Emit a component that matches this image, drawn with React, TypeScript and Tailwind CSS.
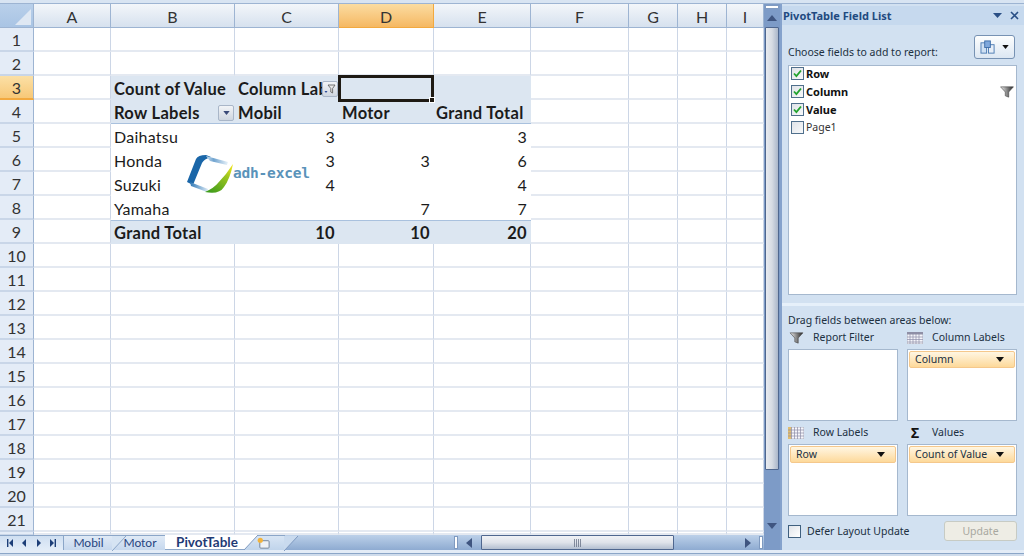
import React from "react";

const cols = ["A", "B", "C", "D", "E", "F", "G", "H", "I"];

type C = { t?: string; b?: boolean; r?: boolean; cls?: string; extra?: React.ReactNode };

const Filter = ({ className = "" }: { className?: string }) => (
  <svg viewBox="0 0 16 14" className={className}>
    <defs>
      <linearGradient id="fg" x1="0" x2="1" y1="0" y2="0">
        <stop offset="0" stopColor="#f0f0f0" />
        <stop offset="0.5" stopColor="#888" />
        <stop offset="1" stopColor="#222" />
      </linearGradient>
    </defs>
    <path d="M0.5 1h15l-5.5 6v6l-4-1.5V7z" fill="url(#fg)" stroke="#444" strokeWidth="0.7" />
  </svg>
);

const GridIcon = () => (
  <svg viewBox="0 0 16 12" className="h-[12px] w-[16px]">
    <rect x="0" y="0" width="16" height="12" fill="#f6f6fb" stroke="#8a8a9a" strokeWidth="0.6" />
    <rect x="0" y="0" width="16" height="2.5" fill="#8f8fa5" />
    <path d="M3 0v12M6 0v12M9 0v12M12 0v12M0 5h16M0 7.5h16M0 10h16" stroke="#8c8ca8" strokeWidth="0.7" />
  </svg>
);

const RowIcon = () => (
  <svg viewBox="0 0 16 12" className="h-[12px] w-[16px]">
    <rect x="0" y="0" width="16" height="12" fill="#f6f6fb" stroke="#8a8a9a" strokeWidth="0.6" />
    <rect x="0" y="0" width="3.5" height="12" fill="#e2bd6f" />
    <path d="M3.5 0v12M6.5 0v12M9.5 0v12M12.5 0v12M0 3h16M0 6h16M0 9h16" stroke="#8c8ca8" strokeWidth="0.7" />
  </svg>
);

const Drop = ({ className = "" }: { className?: string }) => (
  <svg viewBox="0 0 8 5" className={className}>
    <path d="M0 0h8L4 5z" fill="#111" />
  </svg>
);

const Check = ({ on }: { on: boolean }) => (
  <span className="flex h-[13px] w-[13px] shrink-0 items-center justify-center border border-[#4f6f8c] bg-gradient-to-br from-[#dfe3e8] to-[#f8f9fa]">
    {on && (
      <svg viewBox="0 0 11 11" className="h-[11px] w-[11px]">
        <path d="M2 5.5l2.4 2.6L9 2.5" fill="none" stroke="#22a32e" strokeWidth="1.8" />
      </svg>
    )}
  </span>
);

const FilterBtn = ({ funnel }: { funnel?: boolean }) => (
  <span className="absolute right-[1px] top-[5px] flex h-[16px] w-[16px] items-center justify-center rounded-[2px] border border-[#a9b6c8] bg-gradient-to-b from-[#f2f4f7] to-[#cfd6e0]">
    {funnel ? (
      <svg viewBox="0 0 12 10" className="h-[10px] w-[12px]">
        <path d="M4 1h7L8.6 4.5V9L6.8 8V4.5z" fill="#e8e8e8" stroke="#555" strokeWidth="0.8" />
        <path d="M0.5 7h3L2 9z" fill="#2b4a9a" />
      </svg>
    ) : (
      <svg viewBox="0 0 8 5" className="h-[4px] w-[7px]">
        <path d="M0 0h8L4 5z" fill="#3a4a78" />
      </svg>
    )}
  </span>
);

const blue = "bg-[#dce6f1]";
const under = "bg-[#dce6f1] shadow-[inset_0_-1px_0_#a9c1de]";
const over = "bg-[#dce6f1] shadow-[inset_0_1px_0_#a9c1de]";

const pivot: Record<number, C[]> = {
  3: [
    { t: "Count of Value", b: true, cls: blue },
    { t: "Column Labels", b: true, cls: blue, extra: <FilterBtn funnel /> },
    { cls: blue },
    { cls: blue },
  ],
  4: [
    { t: "Row Labels", b: true, cls: under, extra: <FilterBtn /> },
    { t: "Mobil", b: true, cls: under },
    { t: "Motor", b: true, cls: under },
    { t: "Grand Total", b: true, cls: `${under} !pl-[2px]` },
  ],
  5: [{ t: "Daihatsu" }, { t: "3", r: true }, {}, { t: "3", r: true }],
  6: [{ t: "Honda" }, { t: "3", r: true }, { t: "3", r: true }, { t: "6", r: true }],
  7: [{ t: "Suzuki" }, { t: "4", r: true }, {}, { t: "4", r: true }],
  8: [{ t: "Yamaha" }, {}, { t: "7", r: true }, { t: "7", r: true }],
  9: [
    { t: "Grand Total", b: true, cls: over },
    { t: "10", b: true, r: true, cls: over },
    { t: "10", b: true, r: true, cls: over },
    { t: "20", b: true, r: true, cls: over },
  ],
};

const empty = "border-r border-b-2 border-r-[#ccd6e6] border-b-[#e4e9f1]";

function Row({ n, clip }: { n: number; clip?: boolean }) {
  const p = pivot[n];
  const head = n === 3
    ? "bg-gradient-to-b from-[#fbe0a6] to-[#f7c877] border-b-[#f2a93f]"
    : "bg-[#e4ecf7] border-b-[#c9d6e8]";
  return (
    <>
      <div className={`flex items-center justify-center border-r border-b-2 border-r-[#9db4d2] pt-[2px] text-[16px] text-[#333] ${head}`}>
        {!clip && n}
      </div>
      <div className={empty} />
      {p
        ? p.map((c, i) => (
            <div
              key={i}
              className={`relative flex items-center overflow-hidden whitespace-nowrap pb-0 pl-[3px] pr-[4px] pt-[2px] leading-none text-[#1b1b1b] ${c.r ? "justify-end" : ""} ${c.b ? "text-[16.5px] font-bold tracking-[0.3px]" : "text-[16px] tracking-[0.25px]"} ${c.cls ?? ""}`}
            >
              {c.t}
              {c.extra}
            </div>
          ))
        : [0, 1, 2, 3].map((i) => <div key={i} className={empty} />)}
      {[0, 1, 2, 3].map((i) => (
        <div key={i} className={empty} />
      ))}
    </>
  );
}

const Logo = () => (
  <div className="pointer-events-none absolute left-[186px] top-[151px] flex items-center">
    <svg viewBox="0 0 50 42" className="h-[42px] w-[50px]">
      <defs>
        <linearGradient id="lg" x1="0.9" x2="0.2" y1="0" y2="1">
          <stop offset="0" stopColor="#f2e51c" />
          <stop offset="0.35" stopColor="#9cc51f" />
          <stop offset="1" stopColor="#3f9c1c" />
        </linearGradient>
        <linearGradient id="lb1" x1="0" x2="1" y1="0" y2="0">
          <stop offset="0" stopColor="#cfe2f2" />
          <stop offset="0.35" stopColor="#6fa3cf" />
          <stop offset="1" stopColor="#e9f2f9" />
        </linearGradient>
        <linearGradient id="lb2" x1="0" x2="1" y1="0" y2="0">
          <stop offset="0" stopColor="#2f78b5" />
          <stop offset="1" stopColor="#dbe9f5" />
        </linearGradient>
      </defs>
      <path d="M1 27L10 4Q12 0 20 0L25 2Q18 4 16 8L9 25L7 30Z" fill="#1a66a8" />
      <path d="M20 1L42 7L41 10L24 6Z" fill="url(#lb1)" />
      <path d="M4 27L22 34L21 37L5 31Z" fill="url(#lb2)" />
      <path d="M47 9Q44 24 38 32Q33 40 19 37Q28 33 32 28Q40 20 47 9Z" fill="url(#lg)" />
    </svg>
    <span className="-ml-[3px] mb-[6px] font-['DejaVu_Sans_Mono',monospace] text-[14.5px] font-bold leading-none tracking-[-0.2px] text-[#5a93ba]">adh-excel</span>
  </div>
);

const Slant = ({ fill = "#cfdff1" }: { fill?: string }) => (
  <svg viewBox="0 0 14 15" className="absolute -right-[13px] top-0 z-10 h-[15px] w-[14px]">
    <path d="M0 15L14 0H0z" fill={fill} />
    <path d="M0 15L14 0" stroke="#8ba6c8" strokeWidth="1" />
  </svg>
);

const Nav = ({ d }: { d: string }) => (
  <svg viewBox="0 0 8 8" className="h-[8px] w-[8px]">
    <path d={d} fill="#1d3f78" />
  </svg>
);

function TabBar() {
  return (
    <div className="flex h-[15px] items-stretch bg-gradient-to-b from-[#bcd0e9] to-[#8eabd1] text-[12px] leading-none text-[#27457f]">
      <div className="flex w-[63px] items-center justify-around border-t border-t-[#8ba6c8] bg-gradient-to-b from-[#cfdff1] to-[#e3edf8] px-[3px]">
        <Nav d="M1 0h1.4v8H1zM7 0v8L3 4z" />
        <Nav d="M6 0v8L2 4z" />
        <Nav d="M2 0v8l4-4z" />
        <Nav d="M1 0v8l4-4zM5.6 0H7v8H5.6z" />
      </div>
      <div className="relative flex w-[50px] items-center justify-center border-l border-t border-[#8ba6c8] bg-gradient-to-b from-[#e0eaf6] to-[#c6d8ee]">
        Mobil
        <Slant fill="#d6e4f3" />
      </div>
      <div className="relative flex w-[52px] items-center justify-center border-t border-[#8ba6c8] bg-gradient-to-b from-[#e0eaf6] to-[#c6d8ee] pl-[2px]">
        Motor
      </div>
      <div className="relative z-20 flex w-[80px] items-center justify-center bg-white pl-[4px] text-[13.5px] font-bold text-[#1f3a75] shadow-[inset_0_-1px_0_#8ba6c8]">
        PivotTable
        <svg viewBox="0 0 14 15" className="absolute -right-[13px] top-0 h-[15px] w-[14px]">
          <path d="M0 15L14 0H0z" fill="#fff" />
          <path d="M0 15L14 0" stroke="#7f9ac0" strokeWidth="1" />
        </svg>
      </div>
      <div className="relative flex w-[40px] items-center border-t border-[#8ba6c8] bg-gradient-to-b from-[#d8e5f4] to-[#c0d4eb] pl-[12px]">
        <svg viewBox="0 0 15 14" className="h-[13px] w-[14px]">
          <rect x="3" y="4" width="10" height="8" rx="1" fill="#eef2f7" stroke="#6f7f95" />
          <circle cx="3.5" cy="3.5" r="2.8" fill="#f2b33c" />
        </svg>
        <svg viewBox="0 0 14 15" className="absolute -right-[13px] top-0 h-[15px] w-[14px]">
          <path d="M0 15L14 0H0z" fill="#c9daee" />
          <path d="M0 15L14 0" stroke="#7f9ac0" strokeWidth="1" />
        </svg>
      </div>
      <div className="flex-1" />
      <div className="my-[1px] mr-[8px] w-[4px] border border-[#7f9ac0] bg-white" />
      <div className="flex w-[10px] items-center">
        <svg viewBox="0 0 6 10" className="h-[10px] w-[6px]"><path d="M6 0v10L0 5z" fill="#3f5580" /></svg>
      </div>
      <div className="w-[5px]" />
      <div className="flex w-[193px] items-center justify-center rounded-[1px] border border-[#4f678f] bg-gradient-to-b from-[#f0f2f6] via-[#dfe3ea] to-[#b3bfd0]">
        <svg viewBox="0 0 8 8" className="h-[8px] w-[8px]"><path d="M0.5 0v8M2.5 0v8M4.5 0v8M6.5 0v8" stroke="#6a7488" strokeWidth="0.8" /></svg>
      </div>
      <div className="flex w-[85px] items-center justify-end pr-[8px]">
        <svg viewBox="0 0 6 10" className="h-[10px] w-[6px]"><path d="M0 0v10l6-5z" fill="#3f5580" /></svg>
      </div>
      <div className="my-[1px] mr-[1px] w-[4px] border border-[#7f9ac0] bg-white" />
    </div>
  );
}

function VScroll() {
  return (
    <div className="flex w-[16px] shrink-0 flex-col bg-[#7d9bc7] pb-[15px]">
      <div className="mx-[1px] mt-[1px] h-[4px] border border-[#7f9ac0] bg-white" />
      <div className="flex h-[18px] items-center justify-center">
        <svg viewBox="0 0 10 6" className="h-[6px] w-[10px]"><path d="M0 6h10L5 0z" fill="#3f5580" /></svg>
      </div>
      <div className="mx-[1px] h-[443px] flex-none rounded-[1px] border border-[#4f678f] bg-gradient-to-r from-[#e8ebf0] via-[#d6dbe3] to-[#aab6c9]" />
      <div className="flex-1" />
      <div className="flex h-[18px] items-center justify-center">
        <svg viewBox="0 0 10 6" className="h-[6px] w-[10px]"><path d="M0 0h10L5 6z" fill="#3f5580" /></svg>
      </div>
    </div>
  );
}

const Chip = ({ label }: { label: string }) => (
  <div className="m-[1px] flex h-[17px] items-center justify-between rounded-[2px] border border-[#f5c88c] bg-gradient-to-b from-[#fff6e2] to-[#fdd99a] pl-[5px] pr-[10px]">
    <span>{label}</span>
    <Drop className="h-[5px] w-[8px]" />
  </div>
);

const Area = ({ icon, label, chip }: { icon: React.ReactNode; label: string; chip?: string }) => (
  <div className="flex flex-col">
    <div className="flex h-[23px] items-center gap-[9px]">
      <span className="flex w-[16px] justify-center">{icon}</span>
      <span>{label}</span>
    </div>
    <div className="h-[72px] border border-[#a5b8ce] bg-white">{chip && <Chip label={chip} />}</div>
  </div>
);

function Pane() {
  const items: [string, boolean][] = [["Row", true], ["Column", true], ["Value", true], ["Page1", false]];
  return (
    <div className="flex flex-1 flex-col border-l-2 border-l-[#85a2cc] bg-[#d2e1f1] font-['Noto_Sans',sans-serif] text-[10.5px] leading-none text-[#20303f]">
      <div className="mt-[2px] flex h-[19px] items-center justify-between bg-[#c6d9ee] pl-[1px] pr-[5px] text-[11px] font-bold text-[#1f4a80]">
        <span>PivotTable Field List</span>
        <span className="flex items-center gap-[8px]">
          <svg viewBox="0 0 9 5" className="h-[5px] w-[9px]"><path d="M0 0h9L4.5 5z" fill="#2a4f85" /></svg>
          <svg viewBox="0 0 9 9" className="h-[9px] w-[9px]"><path d="M1 1l7 7M8 1l-7 7" stroke="#2a4f85" strokeWidth="1.6" /></svg>
        </span>
      </div>
      <div className="flex h-[40px] items-end justify-between pb-[5px] pl-[6px] pr-[9px]">
        <span className="mb-[3px]">Choose fields to add to report:</span>
        <div className="mb-[1px] flex h-[24px] w-[41px] items-center justify-center gap-[6px] rounded-[3px] border border-[#7792b3] bg-gradient-to-b from-[#fdfefe] to-[#dce7f3]">
          <svg viewBox="0 0 17 16" className="h-[15px] w-[16px]">
            <rect x="1" y="3" width="6" height="11" fill="#cfe0f3" stroke="#4d7cb3" />
            <rect x="9" y="5" width="6" height="9" fill="#e7eef7" stroke="#4d7cb3" />
            <rect x="5" y="1" width="6" height="7" fill="#7fa8dc" stroke="#3f6ea8" />
          </svg>
          <Drop className="h-[4px] w-[7px]" />
        </div>
      </div>
      <div className="relative ml-[6px] mr-[7px] h-[230px] border border-[#a5b8ce] bg-white px-[2px]">
        <div className="-mt-[2px]">
          {items.map(([l, on]) => (
            <div key={l} className="flex h-[18px] items-center gap-[2px]">
              <Check on={on} />
              <span className={on ? "text-[11px] font-bold text-[#111]" : "text-[#333]"}>{l}</span>
            </div>
          ))}
        </div>
        <Filter className="absolute right-[2px] top-[20px] h-[12px] w-[14px]" />
      </div>
      <div className="mt-[8px] h-[3px] bg-[#e6f0fa]" />
      <div className="ml-[6px] mt-[9px] h-[12px]">Drag fields between areas below:</div>
      <div className="mx-[6px] -mt-[1px] grid grid-cols-[110px_110px] gap-x-[9px]">
        <Area icon={<Filter className="h-[12px] w-[15px]" />} label="Report Filter" />
        <Area icon={<GridIcon />} label="Column Labels" chip="Column" />
        <Area icon={<RowIcon />} label="Row Labels" chip="Row" />
        <Area icon={<span className="text-[14px] font-bold text-[#111]">Σ</span>} label="Values" chip="Count of Value" />
      </div>
      <div className="flex flex-1 items-center justify-between pb-[4px] pl-[6px] pr-[7px]">
        <span className="flex items-center gap-[6px]">
          <span className="h-[13px] w-[13px] border border-[#3f607f] bg-gradient-to-br from-[#e0e4ea] to-white" />
          Defer Layout Update
        </span>
        <span className="flex h-[20px] w-[73px] items-center justify-center rounded-[3px] border border-[#c7cbc4] bg-[#eeede5] text-[#a8a8a0]">Update</span>
      </div>
    </div>
  );
}

export default function App() {
  const rows = Array.from({ length: 21 }, (_, i) => i + 1);
  return (
    <div className="flex h-[556px] w-[1024px] flex-col overflow-hidden bg-[#d2e1f1] font-['Lato',sans-serif]">
      <div className="h-[4px] border-b border-b-[#9db4d2] bg-[#d8e4f2]" />
      <div className="flex h-[546px] items-stretch">
        <div className="flex w-[764px] shrink-0 flex-col">
          <div className="relative h-[531px] overflow-hidden bg-white">
            <div className="grid grid-cols-[34px_77px_124px_104px_95px_97px_98px_49px_49px_37px] grid-rows-[24px_repeat(21,24px)_3px]">
              <div className="relative border-r border-b border-[#9db4d2] bg-gradient-to-b from-[#b9d0ea] to-[#a9c4e4]">
                <svg viewBox="0 0 16 16" className="absolute bottom-[2px] right-[2px] h-[16px] w-[16px]">
                  <path d="M16 0v16H0z" fill="#dfe8f3" />
                </svg>
              </div>
              {cols.map((c) => (
                <div
                  key={c}
                  className={`flex items-center justify-center border-r border-b pt-[2px] text-[16px] text-[#333] ${
                    c === "D"
                      ? "border-[#f2a93f] bg-gradient-to-b from-[#fbdca0] to-[#f5b862]"
                      : "border-r-[#9db4d2] border-b-[#9db4d2] bg-gradient-to-b from-[#f3f6fa] to-[#d6e1ee]"
                  }`}
                >
                  {c}
                </div>
              ))}
              {rows.map((n) => (
                <Row key={n} n={n} />
              ))}
              <Row n={22} clip />
            </div>
            <div className="absolute left-[338px] top-[71px] h-[27px] w-[96px] border-[3px] border-[#1e1a14]">
              <span className="absolute -bottom-[4px] -right-[4px] h-[6px] w-[6px] border border-white bg-[#1e1a14]" />
            </div>
            <Logo />
          </div>
          <TabBar />
        </div>
        <div className="flex w-[260px] flex-col">
          <div className="flex flex-1">
            <VScroll />
            <Pane />
          </div>
        </div>
      </div>
      <div className="flex h-[6px] items-start bg-[#e3ecf7] pt-[3px]">
        <div className="h-[3px] w-full border-t border-t-[#8ba6c8] bg-[#cfdcec]" />
      </div>
    </div>
  );
}
